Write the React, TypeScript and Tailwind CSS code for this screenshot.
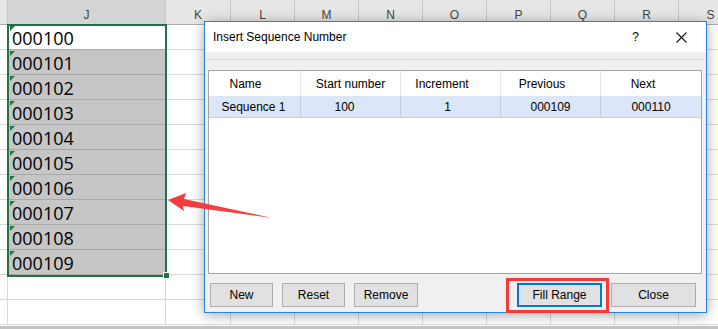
const COLS = ['', 'J', 'K', 'L', 'M', 'N', 'O', 'P', 'Q', 'R', 'S'];
const VALUES = ['000100', '000101', '000102', '000103', '000104', '000105', '000106', '000107', '000108', '000109'];
const ROWS = 12;

const TABLE_COLS = [
  { head: 'Name', value: 'Sequence 1', hp: 'pr-[18px]', vp: 'pr-[2px]' },
  { head: 'Start number', value: '100', hp: 'pr-[0px]', vp: 'pr-[12px]' },
  { head: 'Increment', value: '1', hp: 'pr-[17px]', vp: 'pr-[6px]' },
  { head: 'Previous', value: '000109', hp: 'pr-[17px]', vp: 'pr-[0px]' },
  { head: 'Next', value: '000110', hp: 'pr-[16px]', vp: 'pr-[0px]' },
];

function Sheet() {
  return (
    <div className="grid grid-cols-[8px_158px_65px_64px_64px_64px_64px_64px_64px_64px_64px] auto-rows-[25px]">
      {COLS.map((c, i) => (
        <div
          key={'h' + i}
          className={`flex items-center justify-center pt-[5px] border-r border-b border-r-[#c6c6c6] border-b-[#ababab] text-[12px] text-[#444] ${
            c === 'J' ? 'bg-[#d4d4d4] text-[#222]' : 'bg-[#e6e6e6]'
          }`}
        >
          {c}
        </div>
      ))}
      {Array.from({ length: ROWS }).map((_, r) =>
        COLS.map((c, i) => {
          const sel = c === 'J' && r < 10;
          if (sel) {
            return (
              <div
                key={r + '-' + i}
                className={`relative flex items-center pl-[4px] pt-[2px] border-r border-b border-[#a9a9a9] text-[18px] text-black font-['Open_Sans',sans-serif] ${
                  r === 0 ? 'bg-white' : 'bg-[#c6c6c6]'
                }`}
              >
                <span className="absolute left-[2px] top-[1px] w-0 h-0 border-t-[5px] border-r-[5px] border-t-[#217346] border-r-transparent" />
                {VALUES[r]}
              </div>
            );
          }
          return <div key={r + '-' + i} className="border-r border-b border-[#d9d9d9] bg-white" />;
        })
      )}
    </div>
  );
}

function Btn({ label, w, active }: { label: string; w: string; active?: boolean }) {
  return (
    <div
      className={`${w} h-[24px] flex items-center justify-center bg-[#e1e1e1] text-[12px] text-black ${
        active ? 'border-2 border-[#0078d7]' : 'border border-[#adadad]'
      }`}
    >
      {label}
    </div>
  );
}

function Dialog() {
  return (
    <div className="absolute left-[204px] top-[21px] w-[503px] border border-[#2b82d9] bg-[#f0f0f0] shadow-[0_2px_12px_rgba(0,0,0,0.35)] font-['Liberation_Sans',Arial,sans-serif]">
      <div className="h-[30px] bg-white flex items-center pl-[8px] pr-[19px] text-[12px] text-black">
        <span className="flex-1">Insert Sequence Number</span>
        <span className="mr-[37px] text-[12px]">?</span>
        <svg width="11" height="11" viewBox="0 0 11 11" className="mt-[1px]">
          <path d="M0.5 0.5 L10.5 10.5 M10.5 0.5 L0.5 10.5" stroke="#111" strokeWidth="1.1" fill="none" />
        </svg>
      </div>
      <div className="h-[7px]" />
      <div className="border-t border-[#dedede] pt-[10px] pl-[3px] pr-[5px]">
        <div className="w-[494px] h-[204px] border border-[#a4a4a4] bg-white text-[12px] text-black">
          <div className="grid grid-cols-[92px_100px_100px_100px_100px] h-[25px]">
            {TABLE_COLS.map((c, i) => (
              <div
                key={c.head}
                className={`flex items-center justify-center ${c.hp} ${i < 4 ? 'border-r border-[#e6e6e6]' : ''}`}
              >
                {c.head}
              </div>
            ))}
          </div>
          <div className="grid grid-cols-[92px_100px_100px_100px_100px] h-[22px] bg-[#dbe6f8] border-b border-[#c4ccd8]">
            {TABLE_COLS.map((c, i) => (
              <div
                key={c.value}
                className={`flex items-center justify-center ${c.vp} ${i < 4 ? 'border-r border-[#c4ccd8]' : ''}`}
              >
                {c.value}
              </div>
            ))}
          </div>
        </div>
      </div>
      <div className="flex items-center mt-[9px] mb-[5px] pl-[5px] pr-[10px]">
        <div className="flex gap-[9px]">
          <Btn label="New" w="w-[63px]" />
          <Btn label="Reset" w="w-[63px]" />
          <Btn label="Remove" w="w-[64px]" />
        </div>
        <div className="ml-auto flex gap-[9px]">
          <div className="relative">
            <Btn label="Fill Range" w="w-[85px]" active />
            <div className="absolute -left-[11px] -top-[5px] w-[103px] h-[35px] border-[3px] border-[#f83a3a]" />
          </div>
          <Btn label="Close" w="w-[85px]" />
        </div>
      </div>
    </div>
  );
}

export default function App() {
  return (
    <div className="relative w-[718px] h-[329px] overflow-hidden bg-white font-['Liberation_Sans',Arial,sans-serif]">
      <Sheet />
      <div className="absolute left-0 right-0 top-[326px] h-[3px] bg-[#c4c4c4]" />
      <div className="absolute left-[7px] top-[24px] w-[160px] h-[253px] border-2 border-[#217346]" />
      <div className="absolute left-[163px] top-[272px] w-[7px] h-[7px] bg-[#217346] border border-white" />
      <Dialog />
      <svg className="absolute left-0 top-0 pointer-events-none" width="718" height="329" viewBox="0 0 718 329">
        <polygon points="168,200 186,193 184,199 272,218 183,206 184,211" fill="#f23e3e" />
      </svg>
    </div>
  );
}
